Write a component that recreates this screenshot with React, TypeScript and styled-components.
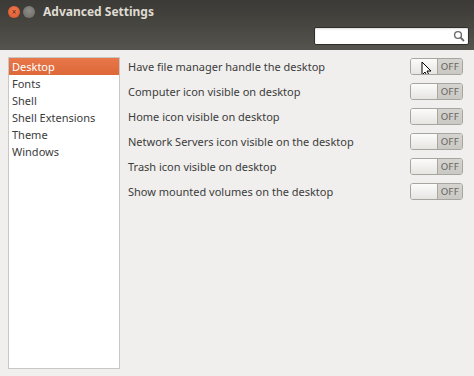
import React, { useState } from 'react';
import styled, { createGlobalStyle } from 'styled-components';

const GlobalStyle = createGlobalStyle`
  html, body {
    margin: 0;
    padding: 0;
    background: #f0efed;
  }
  body {
    font-family: 'Noto Sans', 'DejaVu Sans', sans-serif;
  }
`;

const Window = styled.div`
  width: 474px;
  height: 376px;
  display: flex;
  flex-direction: column;
  background: #f0efed;
  overflow: hidden;
`;

const Header = styled.div`
  height: 50px;
  background: linear-gradient(to bottom, #3b3a36 0%, #45433e 40%, #56544e 100%);
  display: flex;
  flex-direction: column;
`;

const TitleRow = styled.div`
  height: 23px;
  display: flex;
  align-items: center;
  padding-left: 8px;
  gap: 3px;
`;

const WinButton = styled.span<{ $close?: boolean }>`
  width: 12px;
  height: 12px;
  border-radius: 50%;
  background: ${(p) =>
    p.$close
      ? 'radial-gradient(circle at 50% 40%, #f37a4c, #d8542a)'
      : 'radial-gradient(circle at 50% 40%, #8e8c87, #6c6a65)'};
  display: flex;
  align-items: center;
  justify-content: center;
  color: #4a2a1c;
  font-size: 8px;
  line-height: 1;
`;

const Title = styled.span`
  margin-left: 5px;
  color: #dfdbd2;
  font-weight: bold;
  font-size: 12px;
`;

const ToolRow = styled.div`
  flex: 1;
  display: flex;
  justify-content: flex-end;
  align-items: flex-start;
  padding: 4px 5px 0 0;
`;

const Search = styled.div`
  width: 155px;
  height: 18px;
  background: #fff;
  border: 1px solid #2f2e2b;
  border-radius: 2px;
  display: flex;
  align-items: center;
  justify-content: flex-end;
  padding-right: 3px;
  box-sizing: border-box;
  box-shadow: inset 0 1px 2px rgba(0, 0, 0, 0.15);
`;

const Body = styled.div`
  flex: 1;
  display: flex;
  padding: 7px 3px 7px 8px;
  gap: 8px;
`;

const Sidebar = styled.div`
  width: 110px;
  background: #fff;
  border: 1px solid #c9c7c3;
  display: flex;
  flex-direction: column;
`;

const SideItem = styled.div<{ $active?: boolean }>`
  height: 17px;
  line-height: 17px;
  padding-left: 3px;
  font-size: 11px;
  color: ${(p) => (p.$active ? '#ffffff' : '#3c3c3c')};
  background: ${(p) => (p.$active ? 'linear-gradient(#e8774a, #dd6838)' : 'transparent')};
`;

const Settings = styled.div`
  flex: 1;
  display: flex;
  flex-direction: column;
  gap: 8px;
  padding-top: 1px;
`;

const Row = styled.div`
  display: flex;
  align-items: center;
  justify-content: space-between;
  height: 17px;
  padding-right: 8px;
`;

const Label = styled.span`
  font-size: 11px;
  color: #3c3c3c;
`;

const Switch = styled.div`
  width: 53px;
  height: 17px;
  display: flex;
  border: 1px solid #a7a59f;
  border-radius: 3px;
  box-sizing: border-box;
  overflow: hidden;
  position: relative;
`;

const Knob = styled.div`
  width: 26px;
  background: linear-gradient(#fbfbfa, #e6e5e2);
  border-right: 1px solid #a9a7a2;
`;

const OffPart = styled.div`
  flex: 1;
  background: linear-gradient(#d6d4d0, #cac8c3);
  color: #6a6863;
  font-size: 9.5px;
  display: flex;
  align-items: center;
  justify-content: center;
  font-family: 'DejaVu Sans', sans-serif;
`;

const Cursor = styled.svg`
  position: absolute;
  left: 10px;
  top: 2px;
`;

const sections = ['Desktop', 'Fonts', 'Shell', 'Shell Extensions', 'Theme', 'Windows'];

const options = [
  'Have file manager handle the desktop',
  'Computer icon visible on desktop',
  'Home icon visible on desktop',
  'Network Servers icon visible on the desktop',
  'Trash icon visible on desktop',
  'Show mounted volumes on the desktop',
];

const App: React.FC = () => {
  const [active, setActive] = useState('Desktop');

  return (
    <>
      <GlobalStyle />
      <Window>
        <Header>
          <TitleRow>
            <WinButton $close>×</WinButton>
            <WinButton />
            <Title>Advanced Settings</Title>
          </TitleRow>
          <ToolRow>
            <Search>
              <svg width="12" height="12" viewBox="0 0 12 12">
                <circle cx="5" cy="5" r="3.4" fill="none" stroke="#6a6a6a" strokeWidth="1.4" />
                <line x1="7.5" y1="7.5" x2="11" y2="11" stroke="#6a6a6a" strokeWidth="1.8" />
              </svg>
            </Search>
          </ToolRow>
        </Header>
        <Body>
          <Sidebar>
            {sections.map((s) => (
              <SideItem key={s} $active={s === active} onClick={() => setActive(s)}>
                {s}
              </SideItem>
            ))}
          </Sidebar>
          <Settings>
            {options.map((o, i) => (
              <Row key={o}>
                <Label>{o}</Label>
                <Switch>
                  <Knob />
                  <OffPart>OFF</OffPart>
                  {i === 0 && (
                    <Cursor width="11" height="17" viewBox="0 0 11 17">
                      <path d="M1 1 L1 14 L4 11 L6.5 16 L8.5 15 L6 10 L10 10 Z" fill="#fff" stroke="#000" strokeWidth="1" />
                    </Cursor>
                  )}
                </Switch>
              </Row>
            ))}
          </Settings>
        </Body>
      </Window>
    </>
  );
};

export default App;
